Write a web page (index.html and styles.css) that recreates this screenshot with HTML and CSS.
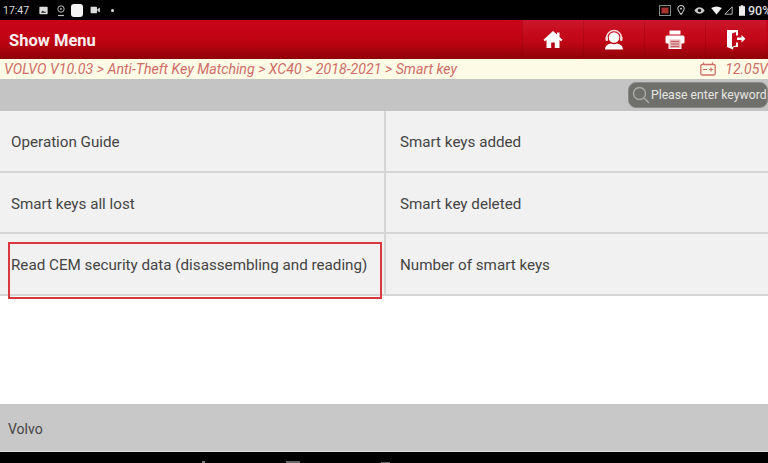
FILE: index.html
```html
<!DOCTYPE html>
<html lang="en">
<head>
    <meta charset="UTF-8">
    <meta name="viewport" content="width=device-width, initial-scale=1.0">
    <title>Show Menu</title>
    <link rel="stylesheet" href="styles.css">
</head>
<body>
    <div class="screen">
        <div class="status-bar">
            <div class="status-left">
                <span class="clock">17:47</span>
                <svg class="icon-pic" width="9" height="9" viewBox="0 0 12 12"><rect x="0.500" y="1" width="11" height="10" rx="1" fill="#ddd"/><path d="M2.500 9l2.500-3 2 2 1-1 1.500 2z" fill="#222"/></svg>
                <svg class="icon-pin" width="8" height="13" viewBox="0 0 8 13"><circle cx="4" cy="5" r="3.200" fill="none" stroke="#bbb" stroke-width="1"/><circle cx="4" cy="5" r="0.900" fill="#bbb"/><path d="M1 11.500h6" stroke="#bbb" stroke-width="1.200"/></svg>
                <span class="white-square"></span>
                <svg class="icon-cam" width="10" height="8" viewBox="0 0 12 10"><rect x="0.500" y="1" width="8" height="8" rx="1" fill="#ddd"/><path d="M9 4l3-2v6l-3-2z" fill="#ddd"/></svg>
                <span class="dot"></span>
            </div>
            <div class="status-right">
                <svg class="icon-cast" width="12" height="11" viewBox="0 0 12 11"><rect x="0.500" y="0.500" width="11" height="10" fill="none" stroke="#8a8a8a" stroke-width="1"/><rect x="2.500" y="2.500" width="7" height="6" fill="#a8322e"/></svg>
                <svg class="icon-loc" width="8" height="12" viewBox="0 0 10 13"><path d="M5 12C3 9 1 7 1 4.800a4 4 0 0 1 8 0C9 7 7 9 5 12z" fill="none" stroke="#ccc" stroke-width="1.300"/><circle cx="5" cy="4.800" r="1.200" fill="#ccc"/></svg>
                <svg class="icon-eye" width="11" height="9" viewBox="0 0 14 10"><path d="M0.500 5C2.500 2 4.500 0.800 7 0.800S11.500 2 13.500 5C11.500 8 9.500 9.200 7 9.200S2.500 8 0.500 5z" fill="#ccc"/><circle cx="7" cy="5" r="2.200" fill="#111"/></svg>
                <svg class="icon-wifi" width="11" height="9" viewBox="0 0 13 11"><path d="M0 2.500Q6.500-1.500 13 2.500L6.500 10.500z" fill="#f2f2f2"/></svg>
                <svg class="icon-signal" width="9" height="9" viewBox="0 0 11 11"><path d="M10 1v9H1z" fill="none" stroke="#bbb" stroke-width="1.200"/></svg>
                <svg class="icon-battery" width="6" height="11" viewBox="0 0 7 12"><path d="M2 0h3v1h2v11H0V1h2z" fill="#eee"/></svg>
                <span class="battery-text">90%</span>
            </div>
        </div>

        <div class="header">
            <div class="header-title">Show Menu</div>
            <div class="toolbar">
                <div class="tool-btn">
                    <svg width="20" height="19" viewBox="0 0 20 19"><path d="M10 1L0.500 9.800 2 11.200l1.500-1.300V18h4.700v-5.500h3.600V18h4.700V9.900l1.500 1.300 1.500-1.400-3-2.800V2.500h-2.500v2.100z" fill="#fff"/></svg>
                </div>
                <div class="tool-btn">
                    <svg width="22" height="21" viewBox="0 0 22 21"><path d="M3.500 9a7.500 7.500 0 0 1 15 0" fill="none" stroke="#f4dcdc" stroke-width="1.500"/><rect x="2.500" y="7.500" width="2.500" height="4.500" rx="1" fill="#f4dcdc"/><rect x="17" y="7.500" width="2.500" height="4.500" rx="1" fill="#f4dcdc"/><circle cx="11" cy="8.500" r="5.300" fill="#fff"/><path d="M2 20.500c0-3.800 3.500-5.500 6-6 1.500 1 4.500 1 6 0 2.500.5 6 2.200 6 6z" fill="#fff"/></svg>
                </div>
                <div class="tool-btn">
                    <svg width="20" height="19" viewBox="0 0 20 19"><rect x="4.500" y="0.500" width="11" height="4" fill="#fff"/><rect x="0.500" y="5.500" width="19" height="8" rx="1.500" fill="#fff"/><rect x="4" y="9" width="12" height="9.500" fill="#e8b4b4" stroke="#fff" stroke-width="1"/><path d="M6 11.500h8M6 14h8M6 16.500h8" stroke="#b5434a" stroke-width="0.800"/></svg>
                </div>
                <div class="tool-btn">
                    <svg width="20" height="21" viewBox="0 0 20 21"><path d="M1 1h11v5.500h-2V3L6 4.500v13.200l4-1.200v-3h2V18H7.500l-.5 2.500L1 18z" fill="#fff"/><path d="M11 8.500h4.500V6l4 3.800-4 3.700v-2.500H11z" fill="#fff"/></svg>
                </div>
            </div>
        </div>

        <div class="breadcrumb">
            <span class="crumbs">VOLVO V10.03 &gt; Anti-Theft Key Matching &gt; XC40 &gt; 2018-2021 &gt; Smart key</span>
            <span class="voltage">
                <svg width="16" height="14" viewBox="0 0 16 14"><rect x="0.800" y="2.500" width="14.400" height="10.500" rx="1.500" fill="none" stroke="#cf6d66" stroke-width="1.300"/><path d="M3.500 0.500v2M12.500 0.500v2M3 7.500h4M9 7.500h4M11 5.500v4" stroke="#cf6d66" stroke-width="1.200" fill="none"/></svg>
                12.05V
            </span>
        </div>

        <div class="search-row">
            <div class="search-box">
                <svg class="search-icon" width="18" height="18" viewBox="0 0 18 18"><circle cx="7.500" cy="7.500" r="6" fill="none" stroke="#a9aaa6" stroke-width="1.400"/><path d="M12 12l5 5" stroke="#a9aaa6" stroke-width="1.600"/></svg>
                <span class="search-text">Please enter keyword</span>
            </div>
        </div>

        <div class="menu-grid">
            <div class="menu-item">Operation Guide</div>
            <div class="menu-item">Smart keys added</div>
            <div class="menu-item">Smart keys all lost</div>
            <div class="menu-item">Smart key deleted</div>
            <div class="menu-item marked">Read CEM security data (disassembling and reading)<span class="red-box"></span></div>
            <div class="menu-item">Number of smart keys</div>
        </div>

        <div class="spacer"></div>

        <div class="footer">Volvo</div>
        <div class="nav-bar">
            <span class="nav-back"></span>
            <span class="nav-home"></span>
            <span class="nav-recent"></span>
        </div>
    </div>
</body>
</html>
```

FILE: styles.css
```css
* {
    box-sizing: border-box;
}
html, body {
    margin: 0;
    padding: 0;
}
body {
    font-family: Roboto, "Liberation Sans", sans-serif;
    background-color: #fff;
}
.screen {
    width: 768px;
    height: 463px;
    display: flex;
    flex-direction: column;
    overflow: hidden;
}
.status-bar {
    height: 20px;
    background-color: #000;
    color: #ddd;
    display: flex;
    justify-content: space-between;
    align-items: center;
    padding: 0 0 0 3px;
    font-size: 10.500px;
}
.status-left, .status-right {
    display: flex;
    align-items: center;
}
.clock {
    margin-right: 10px;
}
.icon-pic {
    margin-right: 9px;
}
.icon-pin {
    margin-right: 6px;
}
.white-square {
    width: 12px;
    height: 13px;
    border-radius: 3px;
    background-color: #f4f4f4;
    margin-right: 7px;
}
.dot {
    width: 3px;
    height: 3px;
    border-radius: 50%;
    background-color: #ddd;
    margin-left: 11px;
}
.icon-cast {
    margin-right: 6px;
}
.icon-loc {
    margin-right: 9px;
}
.icon-eye {
    margin-right: 6px;
}
.icon-wifi {
    margin-right: 2px;
}
.icon-signal {
    margin-right: 6px;
}
.icon-battery {
    margin-right: 3px;
}
.battery-text {
    width: 20px;
    font-weight: 500;
    font-size: 12.500px;
    white-space: nowrap;
}
.header {
    height: 39px;
    background: linear-gradient(#c9051a, #bf0313 55%, #8f0208);
    display: flex;
    justify-content: space-between;
    align-items: center;
    padding-left: 9px;
}
.header-title {
    color: #f7eeee;
    font-size: 16.500px;
    font-weight: 700;
    padding-top: 2px;
}
.toolbar {
    display: flex;
    margin-right: 2px;
}
.tool-btn {
    width: 61px;
    height: 39px;
    display: flex;
    align-items: center;
    justify-content: center;
    background: linear-gradient(rgba(255,255,255,0.07), rgba(255,255,255,0.02) 40%, rgba(0,0,0,0));
    border-left: 1px solid rgba(120,0,0,0.25);
}
.breadcrumb {
    height: 20px;
    background-color: #fdfae6;
    display: flex;
    justify-content: space-between;
    align-items: center;
    padding: 0 0 0 4px;
    color: #cf6d66;
    font-style: italic;
    font-size: 14.200px;
    white-space: nowrap;
}
.voltage {
    display: flex;
    align-items: center;
    gap: 9px;
    font-size: 14px;
}
.search-row {
    height: 32px;
    background-color: #c4c4c4;
    display: flex;
    justify-content: flex-end;
    align-items: center;
}
.search-box {
    width: 140px;
    height: 26px;
    border-radius: 8px;
    background-color: #6f706c;
    border: 1px solid #8a8b87;
    display: flex;
    align-items: center;
    gap: 1px;
    padding-left: 3px;
    color: #e6e6e2;
    font-size: 12.200px;
    white-space: nowrap;
    overflow: hidden;
}
.search-icon {
    flex: none;
}
.menu-grid {
    display: grid;
    grid-template-columns: 384px 384px;
    grid-auto-rows: 61.500px;
    background-color: #fff;
}
.menu-item {
    background-color: #f1f1f1;
    border-bottom: 2px solid #d6d6d6;
    display: flex;
    align-items: center;
    padding: 3px 0 0 11px;
    font-size: 15.200px;
    color: #444;
    position: relative;
}
.menu-item:nth-child(even) {
    border-left: 2px solid #d6d6d6;
    padding-left: 14px;
}
.red-box {
    position: absolute;
    left: 8px;
    top: 8px;
    width: 374px;
    height: 57px;
    border: 2px solid #d8383e;
}
.spacer {
    flex: 1;
    background-color: #fff;
}
.footer {
    height: 48px;
    background-color: #c8c8c8;
    border-bottom: 1px solid #e0e0e0;
    display: flex;
    align-items: center;
    padding: 3px 0 0 8px;
    font-size: 14px;
    color: #444;
}
.nav-bar {
    height: 11px;
    background-color: #000;
    display: flex;
    align-items: flex-end;
    padding-left: 202px;
}
.nav-back {
    width: 3px;
    height: 2px;
    background-color: #777;
}
.nav-home {
    width: 14px;
    height: 2px;
    background-color: #666;
    margin-left: 81px;
}
.nav-recent {
    width: 9px;
    height: 1px;
    background-color: #666;
    margin-left: 81px;
}
```
